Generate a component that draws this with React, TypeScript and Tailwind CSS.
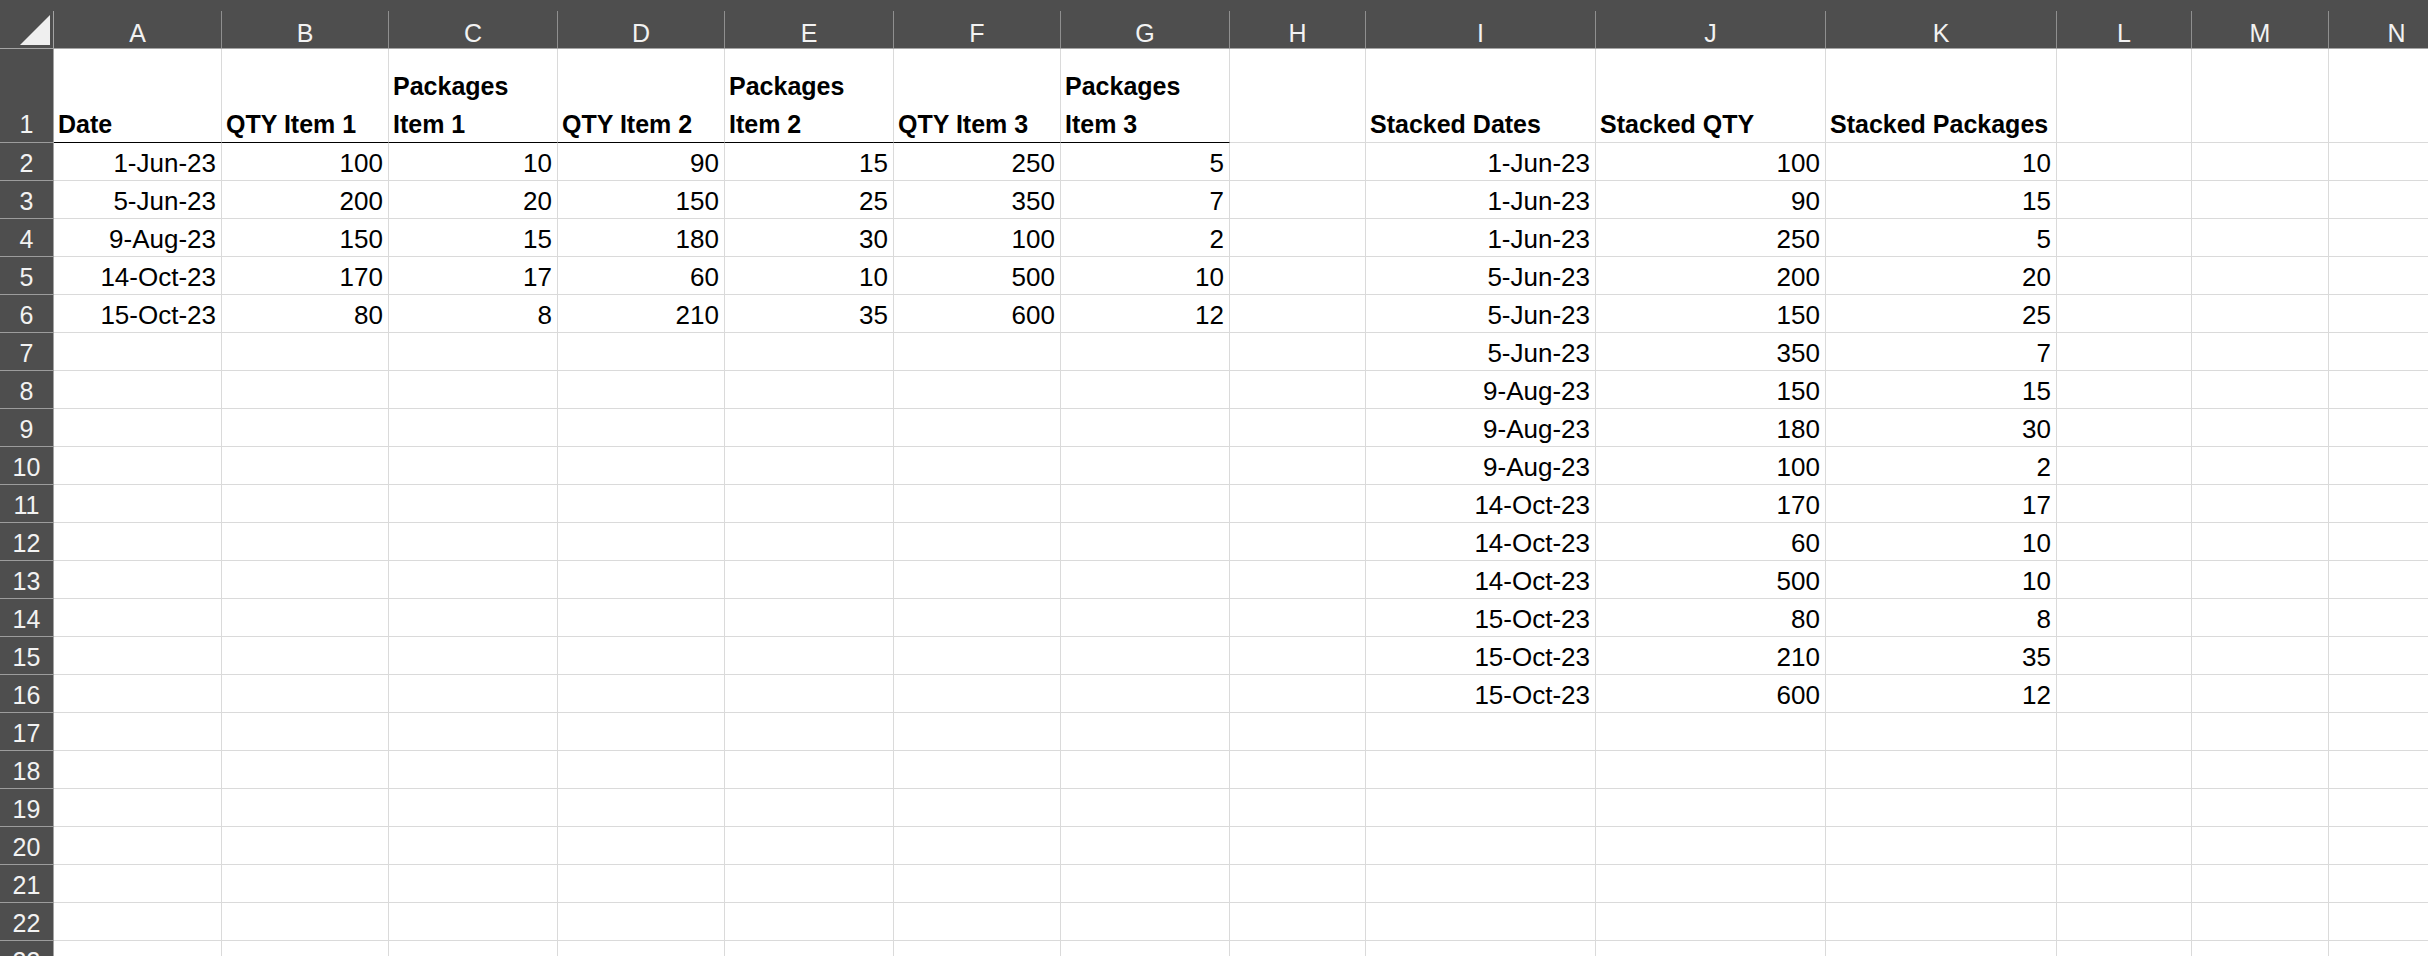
import React from 'react';

const COLS = [
  { letter: 'A', width: 'w-[168px]' },
  { letter: 'B', width: 'w-[167px]' },
  { letter: 'C', width: 'w-[169px]' },
  { letter: 'D', width: 'w-[167px]' },
  { letter: 'E', width: 'w-[169px]' },
  { letter: 'F', width: 'w-[167px]' },
  { letter: 'G', width: 'w-[169px]' },
  { letter: 'H', width: 'w-[136px]' },
  { letter: 'I', width: 'w-[230px]' },
  { letter: 'J', width: 'w-[230px]' },
  { letter: 'K', width: 'w-[231px]' },
  { letter: 'L', width: 'w-[135px]' },
  { letter: 'M', width: 'w-[137px]' },
  { letter: 'N', width: 'w-[136px]' },
];

// row 1 labels, keyed by column index
const LABELS: Record<number, string[]> = {
  0: ['Date'],
  1: ['QTY Item 1'],
  2: ['Packages', 'Item 1'],
  3: ['QTY Item 2'],
  4: ['Packages', 'Item 2'],
  5: ['QTY Item 3'],
  6: ['Packages', 'Item 3'],
  8: ['Stacked Dates'],
  9: ['Stacked QTY'],
  10: ['Stacked Packages'],
};

const source = [
  ['1-Jun-23', '100', '10', '90', '15', '250', '5'],
  ['5-Jun-23', '200', '20', '150', '25', '350', '7'],
  ['9-Aug-23', '150', '15', '180', '30', '100', '2'],
  ['14-Oct-23', '170', '17', '60', '10', '500', '10'],
  ['15-Oct-23', '80', '8', '210', '35', '600', '12'],
];

const stacked = [
  ['1-Jun-23', '100', '10'],
  ['1-Jun-23', '90', '15'],
  ['1-Jun-23', '250', '5'],
  ['5-Jun-23', '200', '20'],
  ['5-Jun-23', '150', '25'],
  ['5-Jun-23', '350', '7'],
  ['9-Aug-23', '150', '15'],
  ['9-Aug-23', '180', '30'],
  ['9-Aug-23', '100', '2'],
  ['14-Oct-23', '170', '17'],
  ['14-Oct-23', '60', '10'],
  ['14-Oct-23', '500', '10'],
  ['15-Oct-23', '80', '8'],
  ['15-Oct-23', '210', '35'],
  ['15-Oct-23', '600', '12'],
];

function cellValue(row: number, col: number) {
  const i = row - 2;
  if (col <= 6 && source[i]) return source[i][col];
  if (col >= 8 && col <= 10 && stacked[i]) return stacked[i][col - 8];
  return '';
}

const rowHeaderClass =
  'w-[54px] shrink-0 border-r border-b border-r-[#a3a3a3] border-b-[#9c9c9c] bg-[#4e4e4e] text-center text-[25px] text-[#f2f2f2]';

function HeaderRow() {
  return (
    <div className="flex h-[49px] shrink-0">
      <div className="flex w-[54px] shrink-0 border-b border-[#a5a5a5] bg-[#4e4e4e]">
        <svg width="53" height="48" viewBox="0 0 53 48" className="shrink-0">
          <polygon points="20,45 50,45 50,15" fill="#efefef" />
        </svg>
        <div className="h-[37px] w-px self-end bg-[#a3a3a3]" />
      </div>
      {COLS.map(c => (
        <div key={c.letter} className={`${c.width} flex shrink-0 border-b border-[#a5a5a5] bg-[#4e4e4e]`}>
          <div className="flex-1 pt-[21px] text-center text-[25px] leading-[25px] text-[#f2f2f2]">{c.letter}</div>
          <div className="h-[37px] w-px self-end bg-[#8f8f8f]" />
        </div>
      ))}
    </div>
  );
}

function LabelRow() {
  return (
    <div className="flex h-[94px] shrink-0">
      <div className={`${rowHeaderClass} flex items-end justify-center leading-[38px]`}>
        <span className="relative top-[1px]">1</span>
      </div>
      {COLS.map((c, i) => {
        const lines = LABELS[i];
        const edge = i <= 6 ? 'border-b-black' : 'border-b-[#dadada]';
        return (
          <div
            key={c.letter}
            className={`${c.width} flex shrink-0 flex-col justify-end border-r border-b border-r-[#dadada] ${edge} pl-[4px] text-[25px] font-bold leading-[38px] whitespace-nowrap text-black`}
          >
            {lines && (
              <div className="relative top-[1px]">
                {lines.map(l => (
                  <div key={l}>{l}</div>
                ))}
              </div>
            )}
          </div>
        );
      })}
    </div>
  );
}

function DataRow({ n }: { n: number }) {
  return (
    <div className="flex h-[38px] shrink-0">
      <div className={`${rowHeaderClass} pt-[8px] leading-[25px]`}>{n}</div>
      {COLS.map((c, i) => (
        <div
          key={c.letter}
          className={`${c.width} shrink-0 border-r border-b border-[#dadada] pt-[7px] pr-[5px] text-right text-[26px] leading-[26px] whitespace-nowrap text-black`}
        >
          {cellValue(n, i)}
        </div>
      ))}
    </div>
  );
}

export default function App() {
  const rows = Array.from({ length: 22 }, (_, i) => i + 2);
  return (
    <div className="flex h-[956px] w-[2428px] flex-col overflow-hidden bg-white font-['Liberation_Sans',Arial,sans-serif]">
      <HeaderRow />
      <LabelRow />
      {rows.map(n => (
        <DataRow key={n} n={n} />
      ))}
    </div>
  );
}
